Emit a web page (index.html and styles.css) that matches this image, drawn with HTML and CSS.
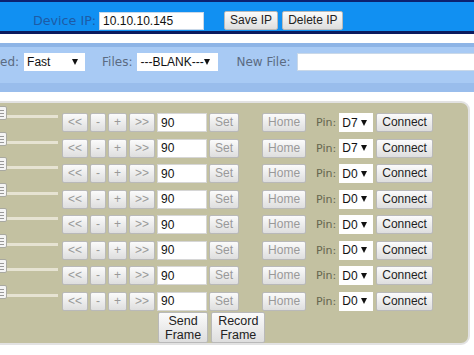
FILE: index.html
```html
<!DOCTYPE html>
<html lang="en">

<head>
    <meta charset="UTF-8">
    <title>Servo Control</title>
    <meta name=viewport content="width=device-width,initial-scale=1">
    <link rel="stylesheet" href="styles.css">
</head>

<body>
    <header class=ipbar>
        <label class=iplabel for=ip>Device IP:</label>
        <input id=ip class=ipinput type=text value="10.10.10.145">
        <button class="btn saveip">Save IP</button>
        <button class=btn>Delete IP</button>
    </header>
    <div class=filebar>
        <span class="flabel speed">Speed:</span>
        <span class="sel sel-speed">Fast</span>
        <span class="flabel files">Files:</span>
        <span class="sel sel-files">---BLANK---</span>
        <span class="flabel newfile">New File:</span>
        <input class=fileinput type=text>
    </div>
    <main class=panel>
        <div class=row>
            <div class=slider><div class=track></div><div class=handle></div></div>
            <button class="btn off">&lt;&lt;</button><button class="btn off">-</button><button class="btn off">+</button><button class="btn off">&gt;&gt;</button>
            <input class=angle type=text value=90><button class="btn off">Set</button>
            <button class="btn off home">Home</button>
            <span class=pinlabel>Pin:</span><span class="sel sel-pin">D7</span><button class="btn connect">Connect</button>
        </div>
        <div class=row>
            <div class=slider><div class=track></div><div class=handle></div></div>
            <button class="btn off">&lt;&lt;</button><button class="btn off">-</button><button class="btn off">+</button><button class="btn off">&gt;&gt;</button>
            <input class=angle type=text value=90><button class="btn off">Set</button>
            <button class="btn off home">Home</button>
            <span class=pinlabel>Pin:</span><span class="sel sel-pin">D7</span><button class="btn connect">Connect</button>
        </div>
        <div class=row>
            <div class=slider><div class=track></div><div class=handle></div></div>
            <button class="btn off">&lt;&lt;</button><button class="btn off">-</button><button class="btn off">+</button><button class="btn off">&gt;&gt;</button>
            <input class=angle type=text value=90><button class="btn off">Set</button>
            <button class="btn off home">Home</button>
            <span class=pinlabel>Pin:</span><span class="sel sel-pin">D0</span><button class="btn connect">Connect</button>
        </div>
        <div class=row>
            <div class=slider><div class=track></div><div class=handle></div></div>
            <button class="btn off">&lt;&lt;</button><button class="btn off">-</button><button class="btn off">+</button><button class="btn off">&gt;&gt;</button>
            <input class=angle type=text value=90><button class="btn off">Set</button>
            <button class="btn off home">Home</button>
            <span class=pinlabel>Pin:</span><span class="sel sel-pin">D0</span><button class="btn connect">Connect</button>
        </div>
        <div class=row>
            <div class=slider><div class=track></div><div class=handle></div></div>
            <button class="btn off">&lt;&lt;</button><button class="btn off">-</button><button class="btn off">+</button><button class="btn off">&gt;&gt;</button>
            <input class=angle type=text value=90><button class="btn off">Set</button>
            <button class="btn off home">Home</button>
            <span class=pinlabel>Pin:</span><span class="sel sel-pin">D0</span><button class="btn connect">Connect</button>
        </div>
        <div class=row>
            <div class=slider><div class=track></div><div class=handle></div></div>
            <button class="btn off">&lt;&lt;</button><button class="btn off">-</button><button class="btn off">+</button><button class="btn off">&gt;&gt;</button>
            <input class=angle type=text value=90><button class="btn off">Set</button>
            <button class="btn off home">Home</button>
            <span class=pinlabel>Pin:</span><span class="sel sel-pin">D0</span><button class="btn connect">Connect</button>
        </div>
        <div class=row>
            <div class=slider><div class=track></div><div class=handle></div></div>
            <button class="btn off">&lt;&lt;</button><button class="btn off">-</button><button class="btn off">+</button><button class="btn off">&gt;&gt;</button>
            <input class=angle type=text value=90><button class="btn off">Set</button>
            <button class="btn off home">Home</button>
            <span class=pinlabel>Pin:</span><span class="sel sel-pin">D0</span><button class="btn connect">Connect</button>
        </div>
        <div class=row>
            <div class=slider><div class=track></div><div class=handle></div></div>
            <button class="btn off">&lt;&lt;</button><button class="btn off">-</button><button class="btn off">+</button><button class="btn off">&gt;&gt;</button>
            <input class=angle type=text value=90><button class="btn off">Set</button>
            <button class="btn off home">Home</button>
            <span class=pinlabel>Pin:</span><span class="sel sel-pin">D0</span><button class="btn connect">Connect</button>
        </div>
        <div class=framerow>
            <button class="btn frame">Send<br>Frame</button>
            <button class="btn frame">Record<br>Frame</button>
        </div>
    </main>
</body>

</html>
```

FILE: styles.css
```css
* {
    margin: 0;
    padding: 0;
    box-sizing: border-box;
}

body {
    font-family: "Liberation Sans", Arial, sans-serif;
    font-size: 12px;
    width: 474px;
    overflow: hidden;
    background-color: white;
}

.btn {
    font-family: "Liberation Sans", Arial, sans-serif;
    font-size: 12px;
    height: 19px;
    line-height: 17px;
    padding: 0 5px;
    border: 1px solid #b9b9b9;
    border-radius: 2px;
    background: linear-gradient(#fbfbfb, #dedede);
    color: #222;
    white-space: nowrap;
    flex-shrink: 0;
}

.btn.off {
    color: #999;
}

/* top bar */
.ipbar {
    display: flex;
    align-items: center;
    height: 34px;
    padding: 8px 0 0 33px;
    background-color: #1190f2;
    border-top: 2px solid #0c2170;
    border-bottom: 3px solid #0c1a5e;
}

.iplabel {
    font-family: "DejaVu Sans", Verdana, sans-serif;
    font-size: 12.7px;
    color: #1d5ba6;
    white-space: nowrap;
}

.ipinput {
    margin-left: 3px;
    width: 105px;
    height: 18px;
    padding-left: 3px;
    border: 1px solid #c9d8e8;
    font-family: "Liberation Sans", Arial, sans-serif;
    font-size: 12px;
    color: #111;
    outline: none;
    flex-shrink: 0;
}

.saveip {
    margin-left: 20px;
    margin-right: 4px;
}

/* file bar */
.filebar {
    display: flex;
    align-items: center;
    height: 49px;
    margin-top: 9px;
    padding-bottom: 6px;
    background-color: #a8caf4;
    border-top: 4px solid #8db4e6;
    border-bottom: 9px solid #99bdec;
}

.filebar > * {
    flex-shrink: 0;
}

.flabel {
    font-family: "DejaVu Sans", Verdana, sans-serif;
    font-size: 12px;
    color: #5b6b82;
    white-space: nowrap;
}

.speed {
    margin-left: -22.6px;
}

.files {
    margin-left: 17px;
}

.newfile {
    margin-left: 18px;
}

.sel {
    display: flex;
    align-items: center;
    height: 18px;
    padding: 0 7px 0 3px;
    background-color: white;
    font-size: 12px;
    color: #111;
    white-space: nowrap;
    flex-shrink: 0;
}

.sel::after {
    content: "";
    margin-left: auto;
    border-left: 3px solid transparent;
    border-right: 3px solid transparent;
    border-top: 6px solid #111;
}

.sel-speed {
    margin-left: 5px;
    width: 61px;
}

.sel-files {
    margin-left: 5px;
    width: 81px;
    padding-right: 8px;
}

.fileinput {
    margin-left: 6px;
    width: 200px;
    height: 18px;
    border: 1px solid #c9d8e8;
    outline: none;
}

/* servo panel */
.panel {
    margin: 9px 4px 0 -20px;
    padding: 10px 0 0 12px;
    background-color: #c3c1a1;
    border: 2px solid #e2e2e2;
    border-radius: 9px;
}

.row {
    display: flex;
    gap: 2px;
    height: 19px;
}

.row > * {
    flex-shrink: 0;
}

.row + .row {
    margin-top: 6.5px;
}

.slider {
    position: relative;
    width: 64px;
    margin-right: 2px;
}

.track {
    margin: 2px 0 0 10px;
    height: 3px;
    background-color: #e6e3d2;
}

.handle {
    position: absolute;
    left: 0;
    top: -7px;
    width: 13px;
    height: 14px;
    border: 1px solid #a9a9a0;
    border-radius: 2px;
    background:
        linear-gradient(#999 0 0) 3px 3px / 6px 1px no-repeat,
        linear-gradient(#999 0 0) 3px 6px / 6px 1px no-repeat,
        linear-gradient(#999 0 0) 3px 9px / 6px 1px no-repeat,
        #f4f4f4;
}

.angle {
    width: 50px;
    height: 19px;
    padding-left: 3px;
    border: 1px solid #d6d6d6;
    font-family: "Liberation Sans", Arial, sans-serif;
    font-size: 12px;
    color: #111;
    outline: none;
}

.home {
    margin-left: 21px;
}

.pinlabel {
    margin-left: 8px;
    font-family: "DejaVu Sans", Verdana, sans-serif;
    font-size: 11px;
    line-height: 19px;
    color: #66664f;
}

.sel-pin {
    margin-left: 1px;
    width: 34px;
    height: 19px;
    padding-right: 6px;
}

.connect {
    margin-left: 1px;
}

.framerow {
    display: flex;
    gap: 3px;
    margin-top: 1.5px;
    padding-left: 164px;
}

.btn.frame {
    height: 31px;
    line-height: 14px;
    padding: 1px 6px;
    font-size: 12.5px;
}
```
